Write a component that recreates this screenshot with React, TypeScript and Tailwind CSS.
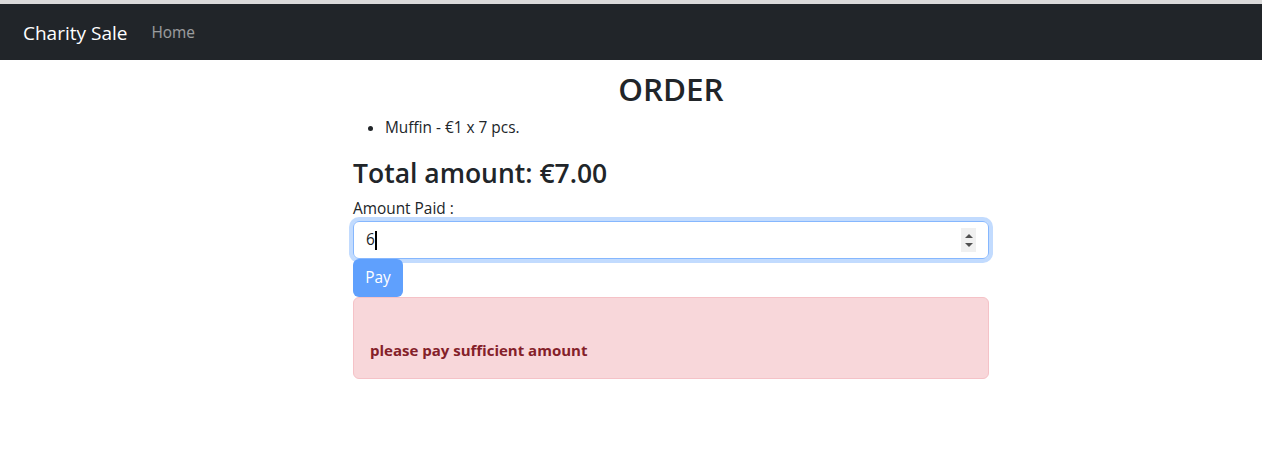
import React from "react";

export default function App() {
  const font = { fontFamily: '"Segoe UI", "Open Sans", "Noto Sans", sans-serif' };
  return (
    <div className="min-h-[469px] bg-white text-[#212529]" style={font}>
      <div className="h-[4px] bg-[#dadada]" />
      <nav className="h-[56px] bg-[#212529] flex items-center pl-[23px] pt-[2px]">
        <span className="text-[19px] text-white mr-[24px]">Charity Sale</span>
        <span className="text-[15.4px] text-white/55">Home</span>
      </nav>
      <main className="ml-[353px] w-[636px] flex flex-col">
        <h2 className="text-[31.4px] font-semibold text-center leading-[38.4px] mt-[10px]">ORDER</h2>
        <ul className="list-disc pl-[32px] mt-[8px] text-[15.4px] leading-[24px]">
          <li>Muffin - €1 x 7 pcs.</li>
        </ul>
        <h3 className="text-[26.5px] font-semibold leading-[33.6px] mt-[17px]">Total amount: €7.00</h3>
        <label className="text-[15.4px] leading-[24px] mt-[6px]">Amount Paid :</label>
        <div className="h-[38px] border border-[#86b7fe] rounded-[6px] shadow-[0_0_0_4px_rgba(13,110,253,0.25)] flex items-center pl-[12px] pr-[12px]">
          <span className="text-[15.4px]">6</span>
          <span className="w-[2px] h-[19px] bg-black" />
          <div className="ml-auto w-[15px] h-[24px] bg-[#f0f0f0] flex flex-col items-center justify-center gap-[5px]">
            <div className="w-0 h-0 border-l-[4px] border-r-[4px] border-b-[4px] border-l-transparent border-r-transparent border-b-[#505050]" />
            <div className="w-0 h-0 border-l-[4px] border-r-[4px] border-t-[4px] border-l-transparent border-r-transparent border-t-[#505050]" />
          </div>
        </div>
        <div>
          <button className="h-[38px] w-[50px] rounded-[6px] bg-[#5fa0fd] text-white text-[15.4px]">Pay</button>
        </div>
        <div className="border border-[#f5c2c7] bg-[#f8d7da] rounded-[6px] p-[16px] text-[#842029]">
          <div className="h-[24px]" />
          <p className="font-bold text-[15px] leading-[24px]">please pay sufficient amount</p>
        </div>
      </main>
    </div>
  );
}
